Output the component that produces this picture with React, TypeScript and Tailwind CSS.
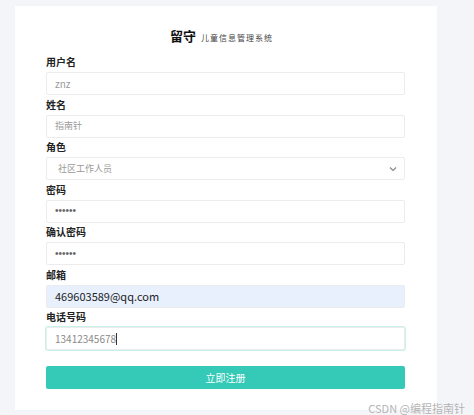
const font = { fontFamily: '"Noto Sans CJK SC", "Noto Sans", sans-serif' }

function Field({ label, children }: { label: string; children: React.ReactNode }) {
  return (
    <div className="flex flex-col">
      <div className="h-[14px] leading-[14px] text-[10px] font-semibold text-[#222] mb-[3px]">{label}</div>
      {children}
    </div>
  )
}

function Box({ children, className = "" }: { children?: React.ReactNode; className?: string }) {
  return (
    <div className={"h-[23px] flex items-center px-[8px] border border-[#ececec] rounded-[2px] " + className}>
      {children}
    </div>
  )
}

const dots = <span className="text-[10px] text-[#666] leading-none" style={{ fontFamily: '"Liberation Sans", sans-serif' }}>••••••</span>

export default function App() {
  return (
    <div className="w-[474px] h-[415px] bg-[#f4f5f9] relative overflow-hidden" style={font}>
      <div className="flex pt-[6px] pl-[15px]">
        <div className="w-[422px] h-[404px] bg-white pl-[31px] pr-[32px] pt-[19px]">
          <div className="flex items-end justify-center gap-[5px] h-[20px] pr-[8px]">
            <span className="text-[13px] font-bold text-[#111] leading-[18px]">留守</span>
            <span className="text-[8px] text-[#444] tracking-[1px] leading-[14px]">儿童信息管理系统</span>
          </div>
          <div className="flex flex-col gap-[2.5px] mt-[10px]">
            <Field label="用户名">
              <Box><span className="text-[10px] text-[#9a9a9a]">znz</span></Box>
            </Field>
            <Field label="姓名">
              <Box><span className="text-[9px] text-[#9a9a9a]">指南针</span></Box>
            </Field>
            <Field label="角色">
              <Box className="justify-between pl-[11px]">
                <span className="text-[9px] text-[#9a9a9a]">社区工作人员</span>
                <svg width="8" height="6" viewBox="0 0 8 6" className="mr-[-1px]">
                  <path d="M1 1.5 4 4.5 7 1.5" fill="none" stroke="#888" strokeWidth="1.2" />
                </svg>
              </Box>
            </Field>
            <Field label="密码">
              <Box>{dots}</Box>
            </Field>
            <Field label="确认密码">
              <Box>{dots}</Box>
            </Field>
            <Field label="邮箱">
              <Box className="bg-[#e8f0fe] border-[#e8f0fe]">
                <span className="text-[11px] text-[#222]">469603589@qq.com</span>
              </Box>
            </Field>
            <Field label="电话号码">
              <Box className="border-[#86e0d3] shadow-[0_0_0_1px_#c9f1ea]">
                <span className="text-[10px] text-[#8a8a8a]">13412345678</span>
                <span className="w-px h-[12px] bg-[#333]" />
              </Box>
            </Field>
          </div>
          <div className="mt-[16px] h-[23px] bg-[#35c9b7] rounded-[2px] flex items-center justify-center">
            <span className="text-[10px] text-white">立即注册</span>
          </div>
        </div>
      </div>
      <div className="absolute right-[9px] bottom-0 text-[11px] text-[#b4b4b4] leading-[13px]">CSDN @编程指南针</div>
    </div>
  )
}
